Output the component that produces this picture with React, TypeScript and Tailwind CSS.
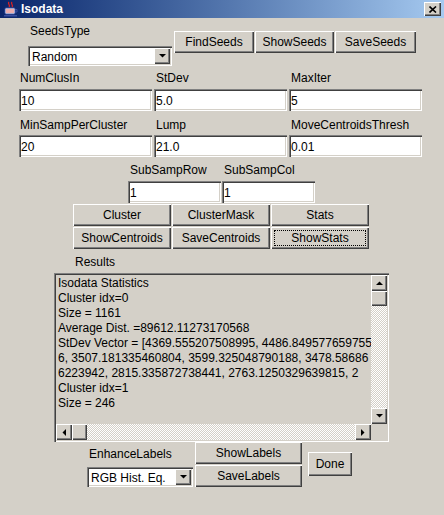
import React from "react";

const raised =
  "shadow-[inset_1px_1px_0_#ffffff,inset_-1px_-1px_0_#404040,inset_-2px_-2px_0_#808080]";
const sunken =
  "shadow-[inset_1px_1px_0_#808080,inset_2px_2px_0_#404040,inset_-1px_-1px_0_#ffffff,inset_-2px_-2px_0_#d4d0c8]";
const track =
  "bg-[repeating-conic-gradient(#ffffff_0_25%,#d4d0c8_0_50%)] bg-[length:2px_2px]";

const lines = [
  "Isodata Statistics",
  "Cluster idx=0",
  "Size = 1161",
  "Average Dist. =89612.11273170568",
  "StDev Vector = [4369.555207508995, 4486.849577659755",
  "6, 3507.181335460804, 3599.325048790188, 3478.58686",
  "6223942, 2815.335872738441, 2763.1250329639815, 2",
  "Cluster idx=1",
  "Size = 246",
];

function Arrow({ dir }: { dir: "up" | "down" | "left" | "right" }) {
  const pts = {
    up: "0,4 7,4 3.5,0.5",
    down: "0,0 7,0 3.5,3.5",
    left: "4,0 4,7 0.5,3.5",
    right: "0,0 0,7 3.5,3.5",
  }[dir];
  const horiz = dir === "left" || dir === "right";
  return (
    <svg width={horiz ? 4 : 7} height={horiz ? 7 : 4} viewBox={horiz ? "0 0 4 7" : "0 0 7 4"}>
      <polygon points={pts} fill="#000" />
    </svg>
  );
}

function Btn({
  label,
  className = "",
  focused = false,
}: {
  label: string;
  className?: string;
  focused?: boolean;
}) {
  return (
    <div
      className={`relative flex items-center justify-center bg-[#d4d0c8] ${raised} ${className}`}
    >
      <span className="pb-[1px]">{label}</span>
      {focused && (
        <div className="absolute inset-x-[3px] inset-y-[3px] border border-dotted border-black" />
      )}
    </div>
  );
}

function Field({ value, className = "" }: { value: string; className?: string }) {
  return (
    <div className={`flex h-[22px] items-center bg-white pl-[2px] pt-[1px] ${sunken} ${className}`}>
      {value}
    </div>
  );
}

function Combo({ value, className = "" }: { value: string; className?: string }) {
  return (
    <div className={`flex h-[20px] items-center bg-white p-[2px] ${sunken} ${className}`}>
      <span className="flex-1 pl-[2px] pt-[1px]">{value}</span>
      <div className={`flex h-[16px] w-[16px] items-center justify-center bg-[#d4d0c8] ${raised}`}>
        <Arrow dir="down" />
      </div>
    </div>
  );
}

function Label({ text, className = "" }: { text: string; className?: string }) {
  return <div className={`h-[14px] leading-[14px] ${className}`}>{text}</div>;
}

function JavaIcon() {
  return (
    <svg width="16" height="16" viewBox="0 0 16 16">
      <path d="M6 1 C4 3 8 4 6 6" stroke="#d22" strokeWidth="1.3" fill="none" />
      <path d="M9 1 C7 3 11 4 9 6" stroke="#d22" strokeWidth="1.3" fill="none" />
      <rect x="2" y="7" width="10" height="6" rx="1" fill="#fff" stroke="#3a4fa0" />
      <path d="M12 8.5 h2 v2.5 h-2" stroke="#3a4fa0" fill="none" />
      <path d="M3 9 h8 M3 11 h8" stroke="#c33" strokeWidth="0.8" />
      <rect x="1" y="14" width="13" height="1.5" fill="#3a4fa0" />
    </svg>
  );
}

export default function App() {
  return (
    <div className="relative h-[515px] w-[444px] overflow-hidden bg-[#d4d0c8] font-['Liberation_Sans',Arial,sans-serif] text-[12px] text-black">
      {/* title bar */}
      <div className="flex h-[18px] items-center bg-linear-to-r from-[#0a246a] to-[#a6caf0] pl-[3px] pr-[3px]">
        <JavaIcon />
        <span className="ml-[2px] font-bold text-white">Isodata</span>
        <div className="flex-1" />
        <div className={`flex h-[14px] w-[17px] items-center justify-center bg-[#d4d0c8] ${raised}`}>
          <svg width="8" height="7" viewBox="0 0 8 7">
            <path d="M0.5 0.5 L7 6.5 M7 0.5 L0.5 6.5" stroke="#000" strokeWidth="1.6" />
          </svg>
        </div>
      </div>

      {/* seeds row */}
      <div className="flex h-[49px] items-start">
        <div className="ml-[28px] flex w-[144px] flex-col pt-[6px]">
          <Label text="SeedsType" className="pl-[2px]" />
          <Combo value="Random" className="mt-[8px]" />
        </div>
        <div className="ml-[2px] mt-[13px] flex gap-[1px]">
          <Btn label="FindSeeds" className="h-[22px] w-[80px]" />
          <Btn label="ShowSeeds" className="h-[22px] w-[79px]" />
          <Btn label="SaveSeeds" className="h-[22px] w-[81px]" />
        </div>
      </div>

      {/* parameters */}
      <div className="ml-[19px] mt-[4px] grid w-[403px] grid-cols-3 gap-x-[2px]">
        <Label text="NumClusIn" className="pl-[1px]" />
        <Label text="StDev" className="pl-[2px]" />
        <Label text="MaxIter" className="pl-[2px]" />
        <Field value="10" className="mt-[4px]" />
        <Field value="5.0" className="mt-[4px]" />
        <Field value="5" className="mt-[4px]" />
        <Label text="MinSampPerCluster" className="mt-[7px] pl-[1px]" />
        <Label text="Lump" className="mt-[7px] pl-[2px]" />
        <Label text="MoveCentroidsThresh" className="mt-[7px] pl-[2px]" />
        <Field value="20" className="mt-[3px]" />
        <Field value="21.0" className="mt-[3px]" />
        <Field value="0.01" className="mt-[3px]" />
      </div>

      {/* sub sampling */}
      <div className="ml-[128px] mt-[6px] grid w-[187px] grid-cols-2 gap-x-[1px]">
        <Label text="SubSampRow" className="pl-[2px]" />
        <Label text="SubSampCol" className="pl-[2px]" />
        <Field value="1" className="mt-[4px]" />
        <Field value="1" className="mt-[4px]" />
      </div>

      {/* cluster buttons */}
      <div className="ml-[73px] mt-[1px] grid w-[296px] grid-cols-3 gap-[1px]">
        <Btn label="Cluster" className="h-[22px]" />
        <Btn label="ClusterMask" className="h-[22px]" />
        <Btn label="Stats" className="h-[22px]" />
        <Btn label="ShowCentroids" className="h-[22px]" />
        <Btn label="SaveCentroids" className="h-[22px]" />
        <Btn label="ShowStats" className="h-[22px]" focused />
      </div>

      <Label text="Results" className="ml-[75px] mt-[6px]" />

      {/* results area */}
      <div className={`ml-[54px] mt-[4px] h-[169px] w-[335px] p-[2px] ${sunken}`}>
        <div className="flex h-[149px]">
          <div className="w-[315px] overflow-hidden whitespace-pre pl-[2px] pt-[1px] leading-[15px]">
            {lines.map((l, i) => (
              <div key={i}>{l}</div>
            ))}
          </div>
          <div className="flex w-[16px] flex-col">
            <div className={`flex h-[16px] items-center justify-center bg-[#d4d0c8] ${raised}`}>
              <Arrow dir="up" />
            </div>
            <div className={`h-[15px] bg-[#d4d0c8] ${raised}`} />
            <div className={`flex-1 ${track}`} />
            <div className={`flex h-[16px] items-center justify-center bg-[#d4d0c8] ${raised}`}>
              <Arrow dir="down" />
            </div>
          </div>
        </div>
        <div className="flex h-[16px]">
          <div className="flex w-[315px]">
            <div className={`flex w-[16px] items-center justify-center bg-[#d4d0c8] ${raised}`}>
              <Arrow dir="left" />
            </div>
            <div className={`w-[15px] bg-[#d4d0c8] ${raised}`} />
            <div className={`flex-1 ${track}`} />
            <div className={`flex w-[16px] items-center justify-center bg-[#d4d0c8] ${raised}`}>
              <Arrow dir="right" />
            </div>
          </div>
          <div className="w-[16px] bg-[#d4d0c8]" />
        </div>
      </div>

      {/* bottom controls */}
      <div className="flex items-start">
        <div className="ml-[87px] flex w-[106px] flex-col pt-[5px]">
          <Label text="EnhanceLabels" className="pl-[2px]" />
          <Combo value="RGB Hist. Eq." className="mt-[6px]" />
        </div>
        <div className="ml-[2px] flex w-[107px] flex-col gap-[1px]">
          <Btn label="ShowLabels" className="h-[22px]" />
          <Btn label="SaveLabels" className="h-[22px]" />
        </div>
        <Btn label="Done" className="ml-[6px] mt-[10px] h-[24px] w-[44px]" />
      </div>
    </div>
  );
}
